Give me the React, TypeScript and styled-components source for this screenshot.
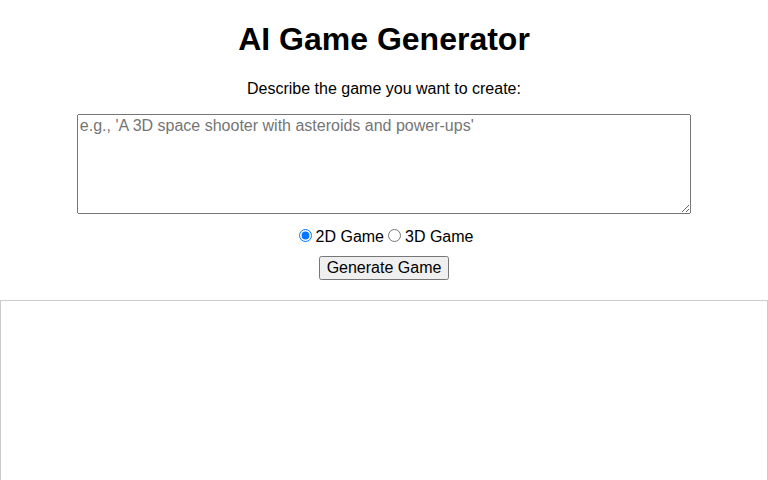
import styled, { createGlobalStyle } from "styled-components";

const GlobalStyle = createGlobalStyle`
  body {
    margin: 0;
    font-family: "Liberation Sans", Arial, sans-serif;
    background: #fff;
    color: #000;
  }
`;

const Page = styled.div`
  text-align: center;
`;

const Title = styled.h1`
  font-size: 32px;
  margin: 21px 0 22px;
`;

const Prompt = styled.p`
  font-size: 16px;
  margin: 0 0 16px;
`;

const PromptBox = styled.textarea`
  display: block;
  box-sizing: border-box;
  width: 80%;
  height: 100px;
  margin: 0 auto;
  padding: 2px;
  font-family: "Liberation Sans", Arial, sans-serif;
  font-size: 16px;
`;

const ModeRow = styled.div`
  margin-top: 12px;
  font-size: 16px;
  line-height: 18px;
`;

const Radio = styled.input`
  margin: 3px 4px 0 4px;
`;

const GenerateButton = styled.button`
  margin-top: 10px;
  font-family: "Liberation Sans", Arial, sans-serif;
  font-size: 16px;
`;

const GameArea = styled.div`
  box-sizing: border-box;
  width: 100%;
  height: 500px;
  margin-top: 20px;
  border: 1px solid #ccc;
`;

const App = () => {
  return (
    <Page>
      <GlobalStyle />
      <Title>AI Game Generator</Title>
      <Prompt>Describe the game you want to create:</Prompt>
      <PromptBox placeholder="e.g., 'A 3D space shooter with asteroids and power-ups'" />
      <ModeRow>
        <Radio type="radio" name="mode" value="2d" defaultChecked />
        2D Game
        <Radio type="radio" name="mode" value="3d" />
        3D Game
      </ModeRow>
      <GenerateButton>Generate Game</GenerateButton>
      <GameArea />
    </Page>
  );
};

export default App;
